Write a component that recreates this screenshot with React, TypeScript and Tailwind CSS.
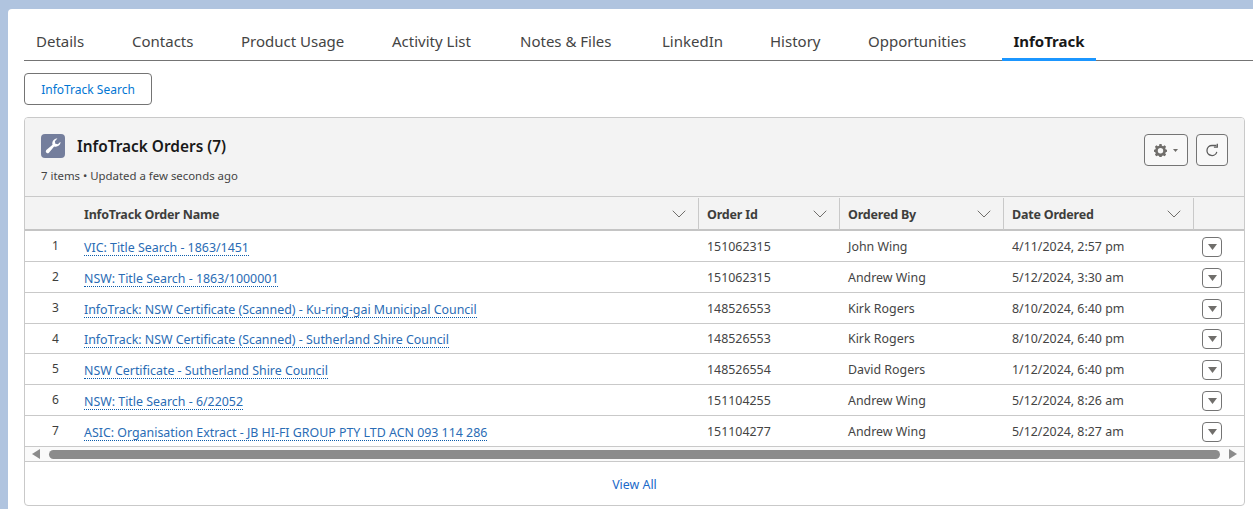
import React from "react";
import { ChevronDown } from "lucide-react";

const tabs: [string, string][] = [
  ["Details", "w-[96px]"],
  ["Contacts", "w-[109px]"],
  ["Product Usage", "w-[151px]"],
  ["Activity List", "w-[128px]"],
  ["Notes & Files", "w-[142px]"],
  ["LinkedIn", "w-[108px]"],
  ["History", "w-[98px]"],
  ["Opportunities", "w-[146px]"],
];

const rows = [
  ["VIC: Title Search - 1863/1451", "151062315", "John Wing", "4/11/2024, 2:57 pm"],
  ["NSW: Title Search - 1863/1000001", "151062315", "Andrew Wing", "5/12/2024, 3:30 am"],
  ["InfoTrack: NSW Certificate (Scanned) - Ku-ring-gai Municipal Council", "148526553", "Kirk Rogers", "8/10/2024, 6:40 pm"],
  ["InfoTrack: NSW Certificate (Scanned) - Sutherland Shire Council", "148526553", "Kirk Rogers", "8/10/2024, 6:40 pm"],
  ["NSW Certificate - Sutherland Shire Council", "148526554", "David Rogers", "1/12/2024, 6:40 pm"],
  ["NSW: Title Search - 6/22052", "151104255", "Andrew Wing", "5/12/2024, 8:26 am"],
  ["ASIC: Organisation Extract - JB HI-FI GROUP PTY LTD ACN 093 114 286", "151104277", "Andrew Wing", "5/12/2024, 8:27 am"],
];

const grid = "grid grid-cols-[51px_623px_141px_164px_190px_1fr]";

function Head({ label }: { label: string }) {
  return (
    <div className="my-px flex h-[32px] items-center justify-between border-r border-[#c9c9c9] pl-2 pr-[7px] text-[12.5px] font-bold text-[#3e3e3c]">
      <span className="pt-[3px] tracking-[-0.2px]">{label}</span>
      <ChevronDown size={24} strokeWidth={1} className="text-[#706e6b]" />
    </div>
  );
}

export default function App() {
  return (
    <div className="h-[509px] w-[1253px] overflow-hidden bg-[#b0c4df] pl-[8px] pt-[9px] font-['Noto_Sans','Open_Sans',sans-serif]">
      <div className="h-[500px] rounded-tl-[4px] bg-white pl-[16px] pr-[8px]">
        <div className="mr-[-8px] flex h-[52px] items-end border-b border-[#747474] text-[15px] text-[#444444]">
          {tabs.map(([t, w]) => (
            <div key={t} className={`${w} flex h-[40px] items-center pl-[12px] pt-[2px]`}>{t}</div>
          ))}
          <div className="mb-[-1px] flex h-[40px] w-[94px] items-center justify-center border-b-[3px] border-[#1b96ff] pt-[3px] font-bold text-[#181818]">InfoTrack</div>
        </div>
        <button className="mt-[12px] flex h-[32px] w-[128px] items-center justify-center rounded-[4px] border border-[#747474] bg-white pt-[1px] text-[12px] text-[#0176d3]">
          InfoTrack Search
        </button>
        <div className="mt-[12px] h-[389px] w-[1221px] overflow-hidden rounded-[4px] border border-[#c9c9c9]">
          <div className="flex h-[79px] justify-between border-b border-[#c9c9c9] bg-[#f3f3f3] px-[16px]">
            <div className="pt-[16px]">
              <div className="flex h-[24px] items-center gap-[12px]">
                <div className="flex h-[24px] w-[24px] items-center justify-center rounded-[4px] bg-[#747e9c]">
                  <svg width="18" height="18" viewBox="0 0 24 24" fill="white" stroke="none">
                    <path d="M22 6.200c.1 2-.7 3.900-2.200 5.200-1.800 1.500-4.200 1.900-6.300 1.100L6.600 20.900a2.300 2.300 0 0 1-3.400 0l-.2-.2a2.400 2.400 0 0 1 .1-3.300l8.300-7c-.7-2.100-.3-4.500 1.200-6.200C13.900 2.800 15.900 2 17.900 2.100l-3.400 3.500.6 3.400 3.400.6z" />
                  </svg>
                </div>
                <div className="pt-[2px] text-[15.4px] font-semibold leading-[24px] text-[#181818]">InfoTrack Orders (7)</div>
              </div>
              <div className="mt-[10px] text-[11.4px] leading-[16px] text-[#444444]">7 items • Updated a few seconds ago</div>
            </div>
            <div className="flex gap-[8px] pt-[16px]">
              <div className="flex h-[32px] w-[44px] items-center justify-center gap-[6px] rounded-[4px] border border-[#747474] bg-white/40">
                <svg width="13" height="13" viewBox="0 0 24 24" fill="#706e6b" fillRule="evenodd">
                  <path d="M10 0h4l.6 3 2.300 1 2.600-1.700 2.800 2.800-1.600 2.600 1 2.300 2.300.6v3.800l-2.300.6-1 2.300 1.600 2.600-2.800 2.800-2.600-1.700-2.300 1-.6 2.500h-4l-.6-2.500-2.300-1-2.600 1.700-2.800-2.800 1.600-2.600-1-2.300L0 14.400v-3.800l2.300-.6 1-2.300-1.600-2.600 2.800-2.800L7.100 4l2.300-1zM12 7.500a5 5 0 1 0 0 10 5 5 0 0 0 0-10z" />
                </svg>
                <svg width="5" height="3" viewBox="0 0 5 3" fill="#706e6b"><path d="M0 0h5L2.500 3z" /></svg>
              </div>
              <div className="flex h-[32px] w-[32px] items-center justify-center rounded-[4px] border border-[#747474] bg-white/40">
                <svg width="14" height="14" viewBox="0 0 14 14" fill="none" stroke="#5c5c5c" strokeWidth="1.300">
                  <path d="M11.800 8.800A5 5 0 1 1 7 2.500H11.500" />
                  <path d="M12.300 .8v3.400H8.900" />
                </svg>
              </div>
            </div>
          </div>
          <div className={`${grid} h-[34px] border-b-2 border-[#c4c4c4] bg-[#f3f3f3]`}>
            <div />
            <Head label="InfoTrack Order Name" />
            <Head label="Order Id" />
            <Head label="Ordered By" />
            <Head label="Date Ordered" />
            <div />
          </div>
          {rows.map((r, i) => (
            <div key={i} className={`${grid} ${i === 3 ? "h-[30px]" : "h-[31px]"} items-center border-b border-[#c9c9c9] text-[12.4px] text-[#444444]`}>
              <div className="pl-[27px] text-[12px] text-[#3e3e3c]">{i + 1}</div>
              <div className="pl-2 pt-[4px]">
                <span className="inline-block border-b border-dotted border-[#0b5cab] leading-[15px] text-[#2a6cb5]">{r[0]}</span>
              </div>
              <div className="pl-2 pt-[2px]">{r[1]}</div>
              <div className="pl-2 pt-[2px]">{r[2]}</div>
              <div className="pl-2 pt-[2px]">{r[3]}</div>
              <div className="pl-[8px] pt-[1px]">
                <div className="flex h-[20px] w-[20px] items-center justify-center rounded-[4px] border border-[#747474]">
                  <svg width="9" height="6" viewBox="0 0 9 6" fill="#706e6b"><path d="M0 0h9L4.500 6z" /></svg>
                </div>
              </div>
            </div>
          ))}
          <div className="flex h-[15px] items-center border-b border-[#c9c9c9] bg-[#fafafa] px-[7px]">
            <svg width="8" height="10" viewBox="0 0 8 10" fill="#8b8b8b"><path d="M8 0v10L0 5z" /></svg>
            <div className="mx-[9px] h-[9px] flex-1 rounded-full bg-[#8b8b8b]" />
            <svg width="8" height="10" viewBox="0 0 8 10" fill="#8b8b8b"><path d="M0 0v10l8-5z" /></svg>
          </div>
          <div className="flex h-[44px] items-center justify-center pt-[2px] text-[12.4px] text-[#1b6ac9]">View All</div>
        </div>
      </div>
    </div>
  );
}
